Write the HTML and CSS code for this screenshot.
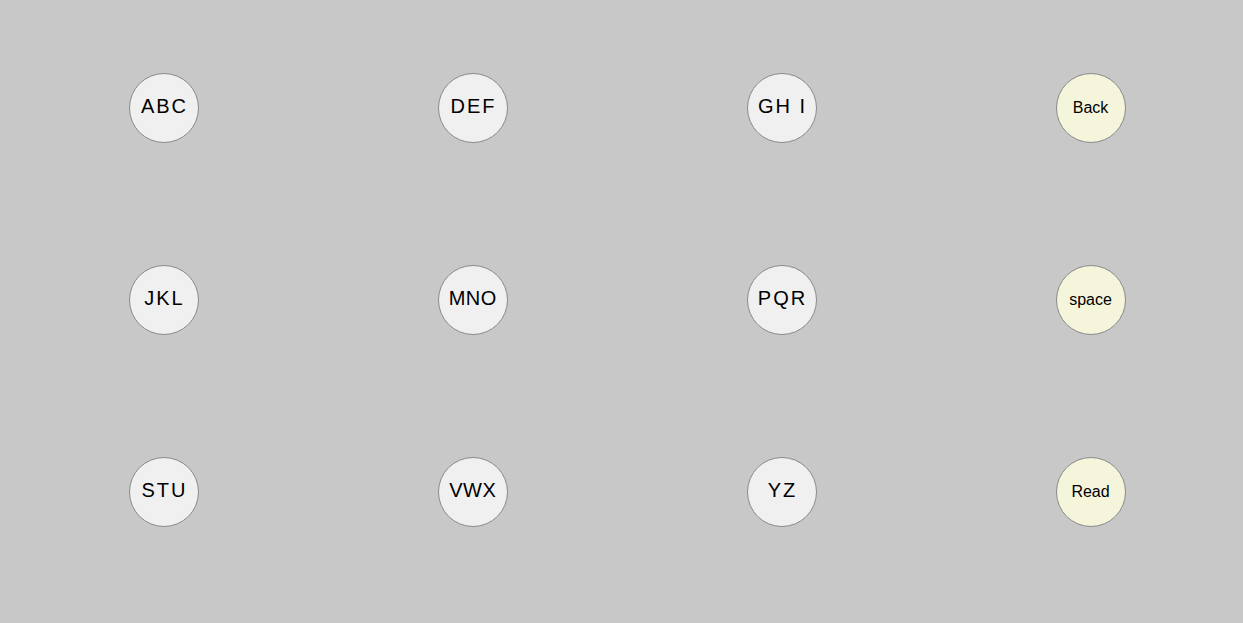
FILE: index.html
```html
<!DOCTYPE html>
<html lang="en">
  <head>
    <meta charset="UTF-8">
    <meta name="viewport" content="width=device-width, initial-scale=1.0">
    <title>Keypad</title>
    <link rel="stylesheet" href="styles.css">
  </head>
  <body>
    <main class="keypad">
        <div class="cell"><button class="key letters">ABC</button></div>
        <div class="cell"><button class="key letters">DEF</button></div>
        <div class="cell"><button class="key letters">GH I</button></div>
        <div class="cell"><button class="key action">Back</button></div>

        <div class="cell"><button class="key letters">JKL</button></div>
        <div class="cell"><button class="key letters tight">MNO</button></div>
        <div class="cell"><button class="key letters">PQR</button></div>
        <div class="cell"><button class="key action">space</button></div>

        <div class="cell"><button class="key letters">STU</button></div>
        <div class="cell"><button class="key letters tight">VWX</button></div>
        <div class="cell"><button class="key letters">YZ</button></div>
        <div class="cell"><button class="key action">Read</button></div>
    </main>
  </body>
</html>
```

FILE: styles.css
```css
html, body {
    margin: 0;
    height: 100%;
    background-color: #c8c8c8;
}
body {
    font-family: "Liberation Sans", Arial, sans-serif;
}
.keypad {
    display: grid;
    grid-template-columns: repeat(4, 309px);
    grid-template-rows: repeat(3, 192px);
    padding: 12px 0 0 9px;
}
.cell {
    display: flex;
    align-items: center;
    justify-content: center;
}
.key {
    width: 70px;
    height: 70px;
    box-sizing: border-box;
    border: 1px solid #8a8a8a;
    border-radius: 50%;
    padding: 0 0 3px 0;
    margin: 0;
    color: #000;
    font-family: "Liberation Sans", Arial, sans-serif;
    display: flex;
    align-items: center;
    justify-content: center;
    white-space: pre;
}
.letters {
    background-color: #f0f0f0;
    font-size: 20px;
    letter-spacing: 2px;
    text-indent: 2px;
}
.tight {
    letter-spacing: 0.5px;
    text-indent: 0.5px;
}
.action {
    background-color: #f5f5dc;
    font-size: 16px;
    padding-bottom: 1px;
}
```
